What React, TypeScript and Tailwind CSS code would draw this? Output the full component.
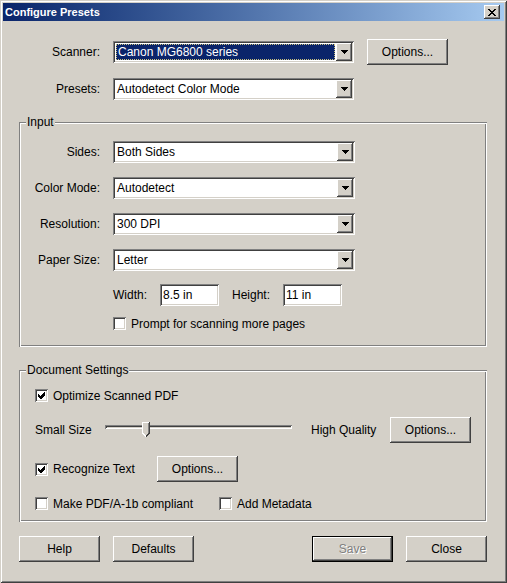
import React from "react";

// classic 3D edges
const raised =
  "shadow-[inset_-1px_-1px_#404040,inset_1px_1px_#ffffff,inset_-2px_-2px_#808080,inset_2px_2px_#d4d0c8]";
const sunken =
  "shadow-[inset_1px_1px_#808080,inset_-1px_-1px_#ffffff,inset_2px_2px_#404040,inset_-2px_-2px_#d4d0c8]";
const etched =
  "shadow-[inset_1px_1px_#808080,inset_-1px_-1px_#ffffff,inset_2px_2px_#ffffff,inset_-2px_-2px_#808080]";

function Arrow() {
  return (
    <div className={`w-[16px] h-full shrink-0 bg-[#d4d0c8] flex items-center justify-center ${raised}`}>
      <svg width="7" height="4" viewBox="0 0 7 4" shapeRendering="crispEdges">
        <path d="M0 0h7v1h-1v1h-1v1h-1v1h-1v-1h-1v-1h-1v-1h-1z" fill="#000" />
      </svg>
    </div>
  );
}

function Combo({ value, w, selected }: { value: string; w: string; selected?: boolean }) {
  return (
    <div className={`${w} h-[22px] shrink-0 bg-white p-[2px] flex ${sunken}`}>
      <div className="flex-1 min-w-0 flex items-center p-[1px]">
        {selected ? (
          <div className="h-full w-full bg-[#0a246a] text-white flex items-center pl-[1px] border border-dotted border-[#c8c080]">
            {value}
          </div>
        ) : (
          <span className="pl-[1px]">{value}</span>
        )}
      </div>
      <Arrow />
    </div>
  );
}

function Field({ value }: { value: string }) {
  return (
    <div className={`w-[59px] h-[22px] shrink-0 bg-white flex items-center pl-[3px] ${sunken}`}>
      {value}
    </div>
  );
}

function Check({ checked }: { checked?: boolean }) {
  return (
    <div className={`w-[13px] h-[13px] shrink-0 bg-white ${sunken}`}>
      {checked && (
        <svg width="13" height="13" viewBox="0 0 13 13" shapeRendering="crispEdges">
          <path d="M3 5L5 7L9 3L10 3L10 6L6 10L5 10L3 8Z" fill="#000" />
        </svg>
      )}
    </div>
  );
}

function Btn({
  children,
  disabled,
  def,
}: {
  children: React.ReactNode;
  disabled?: boolean;
  def?: boolean;
}) {
  return (
    <div
      className={`w-[81px] h-[26px] shrink-0 bg-[#d4d0c8] flex items-center justify-center ${raised} ${
        def ? "border border-black" : ""
      } ${disabled ? "text-[#808080] [text-shadow:1px_1px_0_#ffffff]" : ""}`}
    >
      {children}
    </div>
  );
}

function Group({ title, children, className }: { title: string; children: React.ReactNode; className: string }) {
  return (
    <div className={`relative ml-[16px] w-[468px] ${etched} ${className}`}>
      <span className="absolute left-[7px] -top-[7px] px-[1px] leading-[14px] bg-[#d4d0c8]">{title}</span>
      {children}
    </div>
  );
}

function Slider() {
  return (
    <div className="relative w-[187px] h-[26px] shrink-0">
      <div className={`mt-[8px] w-full h-[4px] ${sunken}`} />
      <svg
        className="absolute left-[37px] top-[5px]"
        width="8"
        height="15"
        viewBox="0 0 8 15"
        shapeRendering="crispEdges"
      >
        <path d="M0 0h8v11l-4 4-4-4z" fill="#d4d0c8" />
        <path d="M0.5 11V0.5H7" stroke="#ffffff" fill="none" />
        <path d="M6.5 1v10" stroke="#808080" fill="none" />
        <path d="M7.5 0v11L4 14.5" stroke="#404040" fill="none" />
        <path d="M0.5 11L4 14.5" stroke="#ffffff" fill="none" />
      </svg>
    </div>
  );
}

export default function App() {
  return (
    <div className="w-[507px] h-[583px] bg-[#d4d0c8] p-[3px] flex flex-col text-[12px] leading-[14px] text-black font-['Liberation_Sans',Arial,sans-serif] shadow-[inset_1px_1px_#d4d0c8,inset_-1px_-1px_#404040,inset_2px_2px_#ffffff,inset_-2px_-2px_#808080]">
      {/* title bar */}
      <div className="h-[18px] shrink-0 flex items-center bg-linear-to-r from-[#0a246a] to-[#a6caf0]">
        <span className="pl-[2px] text-white font-bold text-[11px]">Configure Presets</span>
        <div className={`ml-auto mr-[4px] w-[16px] h-[14px] bg-[#d4d0c8] flex items-center justify-center ${raised}`}>
          <svg width="8" height="7" viewBox="0 0 8 7" shapeRendering="crispEdges">
            <path
              d="M0 0h2v1h1v1h2v-1h1v-1h2v1h-1v1h-1v1h-1v1h1v1h1v1h1v1h-2v-1h-1v-1h-2v1h-1v1h-2v-1h1v-1h1v-1h1v-1h-1v-1h-1v-1h-1z"
              fill="#000"
            />
          </svg>
        </div>
      </div>

      {/* scanner / presets */}
      <div className="mt-[18px] h-[26px] flex items-center">
        <span className="w-[97px] text-right">Scanner:</span>
        <div className="ml-[13px]">
          <Combo value="Canon MG6800 series" w="w-[241px]" selected />
        </div>
        <div className="ml-[13px]">
          <Btn>Options...</Btn>
        </div>
      </div>
      <div className="mt-[13px] h-[22px] flex items-center">
        <span className="w-[97px] text-right">Presets:</span>
        <div className="ml-[13px]">
          <Combo value="Autodetect Color Mode" w="w-[241px]" />
        </div>
      </div>

      {/* input */}
      <Group title="Input" className="mt-[22px] pt-[19px] pb-[17px]">
        {[
          ["Sides:", "Both Sides"],
          ["Color Mode:", "Autodetect"],
          ["Resolution:", "300 DPI"],
          ["Paper Size:", "Letter"],
        ].map(([label, value], i) => (
          <div key={label} className={`h-[22px] flex items-center ${i > 0 ? "mt-[14px]" : ""}`}>
            <span className="w-[81px] text-right">{label}</span>
            <div className="ml-[13px]">
              <Combo value={value} w="w-[242px]" />
            </div>
          </div>
        ))}
        <div className="mt-[13px] h-[22px] flex items-center ml-[94px]">
          <span className="w-[47px]">Width:</span>
          <Field value="8.5 in" />
          <span className="ml-[13px] w-[51px]">Height:</span>
          <Field value="11 in" />
        </div>
        <div className="mt-[11px] h-[13px] flex items-center ml-[94px]">
          <Check />
          <span className="ml-[5px]">Prompt for scanning more pages</span>
        </div>
      </Group>

      {/* document settings */}
      <Group title="Document Settings" className="mt-[23px] pt-[19px] pb-[12px]">
        <div className="h-[13px] flex items-center ml-[16px]">
          <Check checked />
          <span className="ml-[5px]">Optimize Scanned PDF</span>
        </div>
        <div className="mt-[15px] h-[26px] flex items-center ml-[16px]">
          <span className="w-[70px]">Small Size</span>
          <Slider />
          <span className="ml-[19px] w-[79px]">High Quality</span>
          <Btn>Options...</Btn>
        </div>
        <div className="mt-[13px] h-[26px] flex items-center ml-[16px]">
          <Check checked />
          <span className="ml-[5px] w-[104px]">Recognize Text</span>
          <Btn>Options...</Btn>
        </div>
        <div className="mt-[15px] h-[13px] flex items-center ml-[16px]">
          <Check />
          <span className="ml-[5px] w-[166px]">Make PDF/A-1b compliant</span>
          <Check />
          <span className="ml-[5px]">Add Metadata</span>
        </div>
      </Group>

      {/* buttons */}
      <div className="mt-[14px] flex items-center gap-[13px] ml-[16px] mr-[17px]">
        <Btn>Help</Btn>
        <Btn>Defaults</Btn>
        <div className="ml-auto">
          <Btn disabled def>
            Save
          </Btn>
        </div>
        <Btn>Close</Btn>
      </div>
    </div>
  );
}
